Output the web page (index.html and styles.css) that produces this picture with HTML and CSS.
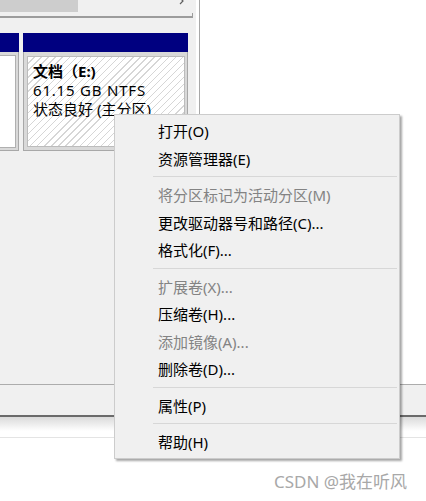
FILE: index.html
```html
<!DOCTYPE html>
<html lang="zh-CN">
<head>
<meta charset="utf-8">
<title>磁盘管理</title>
<link rel="stylesheet" href="styles.css">
</head>
<body>
<div class="screen">
  <div class="toprow">
    <div class="pane">
      <div class="hscroll">
        <div class="thumb"></div>
        <svg class="arrow" width="8" height="8" viewBox="0 0 8 8"><path d="M2 -2 L5 1 L2 4" fill="none" stroke="#606060" stroke-width="1.2"/></svg>
      </div>
      <div class="hline"></div>
      <div class="disk">
        <div class="col col-left">
          <div class="bar"></div>
          <div class="part part-left"><div class="blank"></div></div>
        </div>
        <div class="col col-right">
          <div class="bar"></div>
          <div class="part">
            <div class="hatch">
              <div class="vol-name">文档（E:)</div>
              <div class="vol-size">61.15 GB NTFS</div>
              <div>状态良好 (主分区)</div>
            </div>
          </div>
        </div>
      </div>
    </div>
    <div class="gap"></div>
    <div class="vline"></div>
  </div>
  <div class="band"></div>
  <div class="fade"></div>
  <div class="rule"></div>
</div>

<div class="menu">
  <div class="item">打开(O)</div>
  <div class="item">资源管理器(E)</div>
  <div class="sep"></div>
  <div class="item disabled">将分区标记为活动分区(M)</div>
  <div class="item">更改驱动器号和路径(C)...</div>
  <div class="item">格式化(F)...</div>
  <div class="sep"></div>
  <div class="item disabled">扩展卷(X)...</div>
  <div class="item">压缩卷(H)...</div>
  <div class="item disabled">添加镜像(A)...</div>
  <div class="item">删除卷(D)...</div>
  <div class="sep"></div>
  <div class="item">属性(P)</div>
  <div class="sep"></div>
  <div class="item">帮助(H)</div>
</div>

<div class="watermark">CSDN @我在听风</div>
</body>
</html>
```

FILE: styles.css
```css
* { box-sizing: border-box; }
html, body { margin: 0; padding: 0; }
body {
  width: 426px;
  height: 501px;
  overflow: hidden;
  position: relative;
  background: #ffffff;
  font-family: "Noto Sans", "Noto Sans CJK SC", sans-serif;
  color: #000;
}
.screen { display: flex; flex-direction: column; }
.toprow { display: flex; height: 384px; }
.pane {
  width: 196px;
  background: #f0f0f0;
  display: flex;
  flex-direction: column;
}
.hscroll {
  height: 13px;
  display: flex;
  align-items: flex-start;
  justify-content: space-between;
}
.thumb { width: 78px; height: 12px; background: #cdcdcd; }
.arrow { margin-right: 10px; }
.hline {
  width: 193px;
  height: 5px;
  border-bottom: 2px solid #9c9c9c;
  border-right: 1px solid #9c9c9c;
}
.disk {
  display: flex;
  margin-top: 15px;
  height: 118px;
}
.col { display: flex; flex-direction: column; }
.col-left { width: 19px; }
.col-right { width: 165px; margin-left: 4px; }
.bar { height: 19px; background: #000080; flex: none; }
.part {
  flex: 1;
  background: #d9d9d9;
  border: 1px solid #a8a8a8;
  border-top: none;
  padding: 4px 2px 3px 3px;
  display: flex;
}
.part-left { padding: 3px 2px 2px 0; border-left: none; }
.blank { flex: 1; background: #fff; border: 1px solid #b0b0b0; border-left: none; }
.hatch {
  flex: 1;
  border: 1px solid #bcbcbc;
  background: repeating-linear-gradient(135deg, #ffffff 0 4px, #d6d6d6 4px 5px);
  padding: 5px 0 0 5px;
  font-size: 15px;
  line-height: 19px;
  white-space: nowrap;
  overflow: hidden;
}
.vol-name { font-weight: bold; }
.vol-size { letter-spacing: 0.8px; }
.gap { width: 3px; }
.vline { width: 1px; background: #a8a8a8; }
.band {
  height: 33px;
  background: #f0f0f0;
  border-top: 1px solid #acacac;
  border-bottom: 2px solid #6a6a6a;
}
.fade { height: 14px; background: linear-gradient(#dadada, #ffffff); }
.rule { height: 1px; margin-top: 6px; background: #e4e4e4; }

.menu {
  position: absolute;
  left: 114px;
  top: 114px;
  width: 286px;
  background: #f0f0f0;
  border: 1px solid #cccccc;
  box-shadow: 2px 2px 2px rgba(0,0,0,0.35);
  padding: 3px 2px 1px 0;
  font-size: 15px;
}
.item {
  height: 27.5px;
  line-height: 27.5px;
  padding-left: 43px;
  white-space: nowrap;
  color: #000;
}
.item.disabled { color: #838383; }
.sep {
  height: 1px;
  background: #d7d7d7;
  margin: 3px 0 5px 38px;
}
.watermark {
  position: absolute;
  left: 274px;
  top: 472px;
  font-size: 17px;
  line-height: 20px;
  color: #a8a8a8;
  white-space: nowrap;
}
```
